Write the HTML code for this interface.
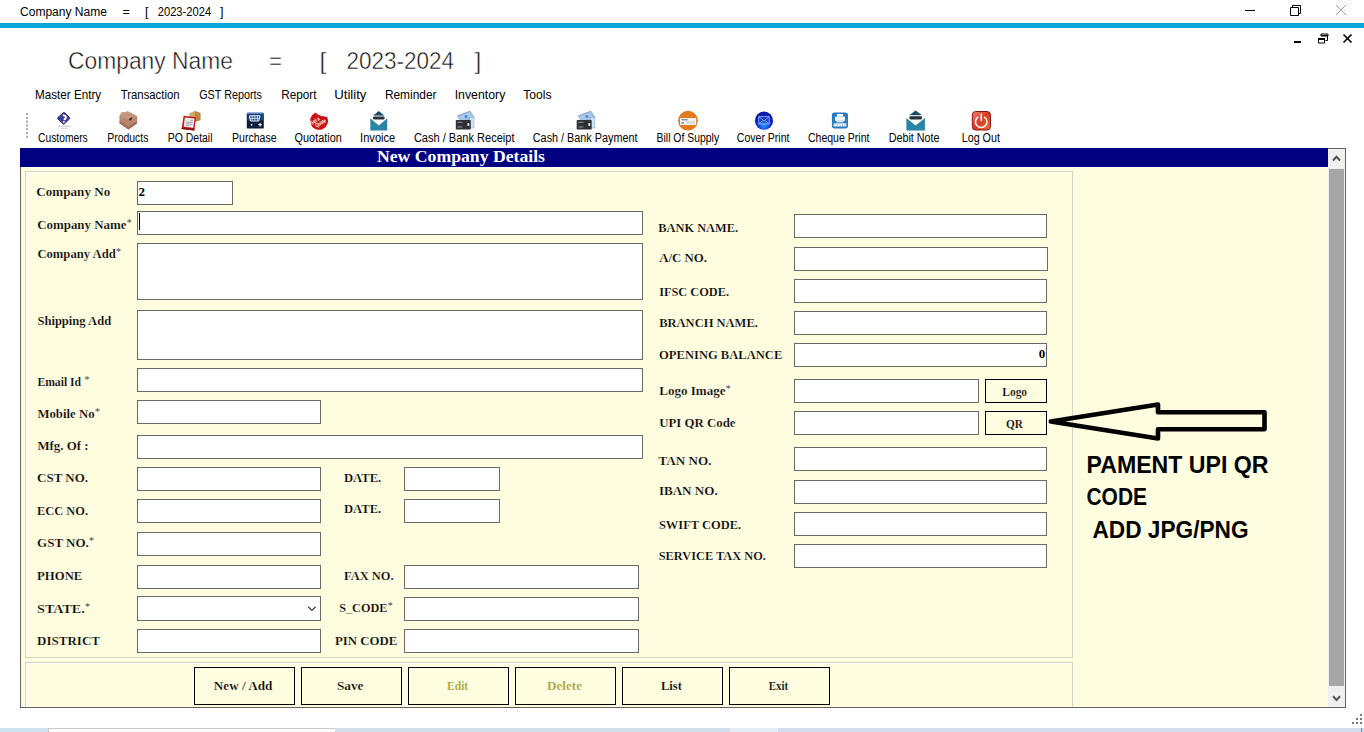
<!DOCTYPE html>
<html><head><meta charset="utf-8"><title>Company Name</title>
<style>html,body{margin:0;padding:0;width:1364px;height:732px;overflow:hidden;background:#fff;font-family:"Liberation Sans",sans-serif} svg{display:block}</style>
</head><body>
<svg width="1364" height="732" viewBox="0 0 1364 732" shape-rendering="geometricPrecision"><rect x="0" y="0" width="1364" height="732" fill="#FFFFFF" />
<text x="20" y="16" font-family="'Liberation Sans', sans-serif" font-size="12.5" font-weight="400" fill="#000" textLength="87" lengthAdjust="spacingAndGlyphs" >Company Name</text>
<text x="122.5" y="16" font-family="'Liberation Sans', sans-serif" font-size="12.5" font-weight="400" fill="#000" >=</text>
<text x="145" y="16" font-family="'Liberation Sans', sans-serif" font-size="12.5" font-weight="400" fill="#000" >[</text>
<text x="157.7" y="16" font-family="'Liberation Sans', sans-serif" font-size="12.5" font-weight="400" fill="#000" textLength="53.5" lengthAdjust="spacingAndGlyphs" >2023-2024</text>
<text x="220" y="16" font-family="'Liberation Sans', sans-serif" font-size="12.5" font-weight="400" fill="#000" >]</text>
<rect x="0" y="23" width="1364" height="5" fill="#0AA6D6" />
<rect x="1245" y="10" width="10" height="1" fill="#000" />
<path d="M1290.5 7.5h8v8h-8z M1292.5 7.5v-2h8v8h-2" fill="none" stroke="#000" stroke-width="1"/>
<path d="M1336 5L1346 15M1346 5L1336 15" stroke="#A0A0A0" stroke-width="1"/>
<rect x="1294" y="41" width="7" height="2" fill="#000" />
<path d="M1321.5 35.5h6v5h-2 M1321 34h7v2h-7z" fill="none" stroke="#000" stroke-width="1"/>
<path d="M1318.5 38.5h6v4.5h-6z" fill="#fff" stroke="#000" stroke-width="1"/><rect x="1318" y="38" width="7" height="2" fill="#000"/>
<path d="M1343.5 34.5L1351.5 42.5M1351.5 34.5L1343.5 42.5" stroke="#000" stroke-width="1.6"/>
<text x="68" y="69" font-family="'Liberation Sans', sans-serif" font-size="24.5" font-weight="400" fill="#101010" textLength="165" lengthAdjust="spacingAndGlyphs" stroke="#FFFFFF" stroke-width="0.5">Company Name</text>
<text x="269" y="69" font-family="'Liberation Sans', sans-serif" font-size="24.5" font-weight="400" fill="#101010" textLength="13" lengthAdjust="spacingAndGlyphs" stroke="#FFFFFF" stroke-width="0.5">=</text>
<text x="319.5" y="69" font-family="'Liberation Sans', sans-serif" font-size="24.5" font-weight="400" fill="#101010" stroke="#FFFFFF" stroke-width="0.5">[</text>
<text x="346.5" y="69" font-family="'Liberation Sans', sans-serif" font-size="24.5" font-weight="400" fill="#101010" textLength="107.5" lengthAdjust="spacingAndGlyphs" stroke="#FFFFFF" stroke-width="0.5">2023-2024</text>
<text x="474.5" y="69" font-family="'Liberation Sans', sans-serif" font-size="24.5" font-weight="400" fill="#101010" stroke="#FFFFFF" stroke-width="0.5">]</text>
<text x="35.1" y="98.7" font-family="'Liberation Sans', sans-serif" font-size="12.4" font-weight="400" fill="#000" textLength="66.1" lengthAdjust="spacingAndGlyphs" >Master Entry</text>
<text x="120.8" y="98.7" font-family="'Liberation Sans', sans-serif" font-size="12.4" font-weight="400" fill="#000" textLength="58.7" lengthAdjust="spacingAndGlyphs" >Transaction</text>
<text x="199.2" y="98.7" font-family="'Liberation Sans', sans-serif" font-size="12.4" font-weight="400" fill="#000" textLength="62.8" lengthAdjust="spacingAndGlyphs" >GST Reports</text>
<text x="281.2" y="98.7" font-family="'Liberation Sans', sans-serif" font-size="12.4" font-weight="400" fill="#000" textLength="35.3" lengthAdjust="spacingAndGlyphs" >Report</text>
<text x="334.2" y="98.7" font-family="'Liberation Sans', sans-serif" font-size="12.4" font-weight="400" fill="#000" textLength="32.3" lengthAdjust="spacingAndGlyphs" >Utility</text>
<text x="384.9" y="98.7" font-family="'Liberation Sans', sans-serif" font-size="12.4" font-weight="400" fill="#000" textLength="51.6" lengthAdjust="spacingAndGlyphs" >Reminder</text>
<text x="454.7" y="98.7" font-family="'Liberation Sans', sans-serif" font-size="12.4" font-weight="400" fill="#000" textLength="50.6" lengthAdjust="spacingAndGlyphs" >Inventory</text>
<text x="523.2" y="98.7" font-family="'Liberation Sans', sans-serif" font-size="12.4" font-weight="400" fill="#000" textLength="28.3" lengthAdjust="spacingAndGlyphs" >Tools</text>
<rect x="26" y="113.0" width="2" height="2" fill="#A8A8A8" />
<rect x="26" y="116.8" width="2" height="2" fill="#A8A8A8" />
<rect x="26" y="120.6" width="2" height="2" fill="#A8A8A8" />
<rect x="26" y="124.4" width="2" height="2" fill="#A8A8A8" />
<rect x="26" y="128.2" width="2" height="2" fill="#A8A8A8" />
<rect x="26" y="132.0" width="2" height="2" fill="#A8A8A8" />
<rect x="26" y="135.8" width="2" height="2" fill="#A8A8A8" />
<text x="38.099999999999994" y="141.8" font-family="'Liberation Sans', sans-serif" font-size="12.5" font-weight="400" fill="#000" textLength="49.6" lengthAdjust="spacingAndGlyphs" >Customers</text>
<text x="107.2" y="141.8" font-family="'Liberation Sans', sans-serif" font-size="12.5" font-weight="400" fill="#000" textLength="41.2" lengthAdjust="spacingAndGlyphs" >Products</text>
<text x="167.8" y="141.8" font-family="'Liberation Sans', sans-serif" font-size="12.5" font-weight="400" fill="#000" textLength="44.7" lengthAdjust="spacingAndGlyphs" >PO Detail</text>
<text x="232.10000000000002" y="141.8" font-family="'Liberation Sans', sans-serif" font-size="12.5" font-weight="400" fill="#000" textLength="44.4" lengthAdjust="spacingAndGlyphs" >Purchase</text>
<text x="294.6" y="141.8" font-family="'Liberation Sans', sans-serif" font-size="12.5" font-weight="400" fill="#000" textLength="47.2" lengthAdjust="spacingAndGlyphs" >Quotation</text>
<text x="360.1" y="141.8" font-family="'Liberation Sans', sans-serif" font-size="12.5" font-weight="400" fill="#000" textLength="35.2" lengthAdjust="spacingAndGlyphs" >Invoice</text>
<text x="413.90000000000003" y="141.8" font-family="'Liberation Sans', sans-serif" font-size="12.5" font-weight="400" fill="#000" textLength="100.6" lengthAdjust="spacingAndGlyphs" >Cash / Bank Receipt</text>
<text x="532.8" y="141.8" font-family="'Liberation Sans', sans-serif" font-size="12.5" font-weight="400" fill="#000" textLength="104.7" lengthAdjust="spacingAndGlyphs" >Cash / Bank Payment</text>
<text x="656.5999999999999" y="141.8" font-family="'Liberation Sans', sans-serif" font-size="12.5" font-weight="400" fill="#000" textLength="62.5" lengthAdjust="spacingAndGlyphs" >Bill Of Supply</text>
<text x="736.8" y="141.8" font-family="'Liberation Sans', sans-serif" font-size="12.5" font-weight="400" fill="#000" textLength="52.7" lengthAdjust="spacingAndGlyphs" >Cover Print</text>
<text x="807.9" y="141.8" font-family="'Liberation Sans', sans-serif" font-size="12.5" font-weight="400" fill="#000" textLength="61.6" lengthAdjust="spacingAndGlyphs" >Cheque Print</text>
<text x="888.6999999999999" y="141.8" font-family="'Liberation Sans', sans-serif" font-size="12.5" font-weight="400" fill="#000" textLength="50.8" lengthAdjust="spacingAndGlyphs" >Debit Note</text>
<text x="961.6999999999999" y="141.8" font-family="'Liberation Sans', sans-serif" font-size="12.5" font-weight="400" fill="#000" textLength="38.2" lengthAdjust="spacingAndGlyphs" >Log Out</text>
<g id="icons">
<!-- Customers -->
<path d="M64 112.4 Q64.4 112.4 64.8 112.8 L69.6 117.6 Q70.1 118.2 69.6 118.8 L64.3 123.9 Q63.7 124.4 63.1 123.9 L57.8 118.8 Q57.3 118.2 57.8 117.6 L63.2 112.8 Q63.6 112.4 64 112.4Z" fill="#40409E" stroke="#23236A" stroke-width="0.9"/>
<path d="M62.6 114.6 Q66.6 114.2 66.8 117.2 Q66.9 119.6 64.4 120.4 L63.4 118.9 Q65.1 118.3 64.9 117 Q64.7 115.9 62.9 116.2Z" fill="#FFFFFF"/>
<circle cx="63.8" cy="122" r="0.95" fill="#FFFFFF"/>
<rect x="58" y="125.6" width="12" height="1.1" fill="#C4C4D2"/>
<rect x="60.5" y="127.8" width="7" height="1" fill="#CFCFDA"/>
<!-- Products box -->
<path d="M119.4 115.9 L122 112.3 L125.5 112.5 L127.5 111.2 L137.3 116.2 L137 123.4 L128.5 129.5 L119.6 123.4Z" fill="#B8876E"/>
<path d="M119.4 115.9 L122 112.3 L125.5 112.5 L127.5 111.2 L137.3 116.2 L130 120 Z" fill="#C49680"/>
<path d="M119.6 123.4 L128.5 129.5 L137 123.4 L137 121 L128.5 126.5 L119.6 121Z" fill="#A26E58"/>
<path d="M129 119.6 L132 117.6 L130.6 120.2Z" fill="#3A2016" stroke="#3A2016" stroke-width="0.8"/>
<!-- PO Detail -->
<path d="M189.5 113.2 L195 111 L200.4 113 V120 L195 122 L189.5 120Z" fill="#D2A664"/>
<path d="M195 111 L200.4 113 V120 L195 122Z" fill="#B88646"/>
<path d="M183.6 115.8 L196 117.2 L194.4 130.4 L181.6 129Z" fill="#C01818"/>
<path d="M184.9 117.5 L194.5 118.6 L193.3 127.8 L183.7 126.7Z" fill="#F4F2F2"/>
<path d="M190 120.2 l3 0.3 M186 121.8 l7 0.8 M185.8 123.6 l6.8 0.8 M185.6 125.3 l4 0.4" stroke="#7A7A8A" stroke-width="0.7"/>
<path d="M181.6 129 L194.4 130.4 L194.6 128.8 L181.8 127.4Z" fill="#8A1010"/>
<!-- Purchase -->
<rect x="246.8" y="112.8" width="17" height="15.8" rx="1.2" fill="#0B1E3C"/>
<rect x="246.8" y="112.8" width="17" height="1.6" fill="#4C7FC0"/>
<rect x="247.6" y="114.4" width="15.4" height="6" fill="#16427E"/>
<path d="M249.5 115.8 h10.5 l-1.2 5.2 h-8.3z" fill="none" stroke="#E8F0FF" stroke-width="1"/>
<path d="M252.2 115.8 v5.2 M254.8 115.8 v5.2 M257.4 115.8 v5.2 M249.8 118.4 h10" stroke="#E8F0FF" stroke-width="0.8"/>
<circle cx="251.6" cy="124.8" r="0.9" fill="#fff"/>
<path d="M258.3 124.8 h3.6 M260.1 123 v3.6" stroke="#fff" stroke-width="1.1"/>
<!-- Quotation -->
<path d="M314.8 112.9 Q320.5 117.3 327.3 117.2 A9 9 0 1 1 314.8 112.9Z" fill="#D01010"/>
<path d="M314.8 112.9 Q320.5 117.3 327.3 117.2" fill="none" stroke="#8A0A0A" stroke-width="0.8"/>
<path d="M316 112.6 Q322 112.5 327 116.6 Q320.5 116.6 316 112.6Z" fill="#EDEDED"/>
<text x="0" y="0" font-family="'Liberation Sans', sans-serif" font-size="5.6" font-weight="700" fill="#FFFFFF" textLength="10" lengthAdjust="spacingAndGlyphs" transform="translate(311.6 125) rotate(-30)">Get a</text>
<text x="0" y="0" font-family="'Liberation Sans', sans-serif" font-size="5.6" font-weight="700" fill="#FFFFFF" textLength="11.5" lengthAdjust="spacingAndGlyphs" transform="translate(316.4 127.6) rotate(-30)">Quote</text>
<!-- Invoice -->
<path d="M371.5 117 L378.8 111.1 L386 117Z" fill="#1C4A6A"/>
<rect x="371.6" y="115.6" width="14.4" height="8.5" fill="#FFFFFF"/>
<rect x="373" y="116.6" width="11.6" height="3" rx="1.3" fill="#263238"/>
<path d="M370.3 118.2 L378.8 125.4 L387.2 118.2 V130.6 H370.3Z" fill="#2A86A9"/>
<!-- Cash receipt -->
<path d="M457.5 115.8 L470 111.3 L474 117.5 L461.5 122Z" fill="#A9C8EA" stroke="#5E8BC4" stroke-width="0.7"/>
<circle cx="466" cy="116.5" r="1.6" fill="#5E8BC4"/>
<rect x="469.5" y="117.5" width="4.5" height="10.5" fill="#D3E3F3" stroke="#7FA5D2" stroke-width="0.5"/>
<rect x="455.8" y="120" width="15" height="9.5" rx="0.8" fill="#2D3136"/>
<rect x="457.5" y="121.8" width="5" height="0.9" fill="#9AA"/><rect x="457.5" y="126.5" width="5" height="0.9" fill="#9AA"/>
<rect x="467.5" y="123" width="1.8" height="3" fill="#DDD"/>
<!-- Cash payment -->
<path d="M578.4 115.8 L590.9 111.3 L594.9 117.5 L582.4 122Z" fill="#A9C8EA" stroke="#5E8BC4" stroke-width="0.7"/>
<circle cx="586.9" cy="116.5" r="1.6" fill="#5E8BC4"/>
<rect x="590.4" y="117.5" width="4.5" height="10.5" fill="#D3E3F3" stroke="#7FA5D2" stroke-width="0.5"/>
<rect x="576.7" y="120" width="15" height="9.5" rx="0.8" fill="#2D3136"/>
<rect x="578.4" y="121.8" width="5" height="0.9" fill="#9AA"/><rect x="578.4" y="126.5" width="5" height="0.9" fill="#9AA"/>
<rect x="588.4" y="123" width="1.8" height="3" fill="#DDD"/>
<!-- Bill of supply -->
<circle cx="688" cy="120.7" r="9.9" fill="#E27A1E"/>
<rect x="680" y="118" width="16.2" height="7" fill="#F2F2F2"/>
<rect x="681.5" y="119.3" width="6" height="1" fill="#666"/><rect x="681.5" y="122.5" width="2.5" height="1" fill="#444"/>
<rect x="686" y="121" width="9" height="3" fill="#D8DCE4"/>
<!-- Cover print -->
<defs><radialGradient id="rg1" cx="0.5" cy="0.75" r="0.6"><stop offset="0" stop-color="#2C9CF0"/><stop offset="0.55" stop-color="#1436D8"/><stop offset="1" stop-color="#0A1AA8"/></radialGradient></defs>
<circle cx="764" cy="120.7" r="9.1" fill="url(#rg1)"/>
<path d="M758.8 116.6 h10.4 v7.4 h-10.4z M758.8 116.6 l5.2 4.3 l5.2-4.3 M758.8 124 l3.6-3.1 M769.2 124 l-3.6-3.1" fill="none" stroke="#9CC4FF" stroke-width="0.8"/>
<!-- Cheque print -->
<rect x="831.9" y="112.6" width="16.1" height="15.8" rx="2.6" fill="#2A7BC0"/>
<rect x="837" y="114" width="6" height="2.5" fill="#FFFFFF"/>
<rect x="835" y="116.5" width="10" height="4.5" rx="1" fill="#F0F6FC"/>
<rect x="836.5" y="120.5" width="7" height="2" fill="#C8DDF0"/>
<rect x="833.6" y="123.4" width="12.8" height="3" fill="#FFFFFF"/>
<path d="M835 124.2h1.2M837.5 124.2v2M840 124.2v2M842.5 124.2v2M845 124.2v2" stroke="#2A7BC0" stroke-width="0.5"/>
<!-- Debit note -->
<path d="M907.6 116.6 L915.6 110.6 L923.7 116.6Z" fill="#1C4A6A"/>
<rect x="907.8" y="115.2" width="15.8" height="8.8" fill="#FFFFFF"/>
<rect x="909.3" y="116.2" width="12.8" height="3.2" rx="1.4" fill="#263238"/>
<path d="M906.4 118 L915.65 125.4 L924.9 118 V130.4 H906.4Z" fill="#2A86A9"/>
<!-- Log out -->
<defs><linearGradient id="lg1" x1="0" y1="0" x2="1" y2="1"><stop offset="0" stop-color="#F08070"/><stop offset="0.5" stop-color="#D83A20"/><stop offset="1" stop-color="#F07040"/></linearGradient></defs>
<rect x="972.3" y="111.5" width="18.2" height="18.5" rx="3.4" fill="url(#lg1)" stroke="#8E1410" stroke-width="1"/>
<path d="M978.3 116.9 a5.7 5.7 0 1 0 5.8 0" fill="none" stroke="#FFFFFF" stroke-width="1.4"/>
<rect x="980.5" y="113.8" width="1.6" height="7.4" fill="#FFFFFF"/>
</g>

<rect x="20" y="148" width="1326" height="560" fill="#646464" />
<rect x="21" y="149" width="1324" height="558" fill="#FFFDE0" />
<rect x="20" y="148" width="1308" height="19" fill="#000080" />
<rect x="21" y="167" width="1307" height="1" fill="#FFFFFF" />
<rect x="1328" y="149" width="17" height="558" fill="#F0F0F0" />
<rect x="1329" y="169" width="15" height="517" fill="#A6A6A6" />
<path d="M1333 160.5L1336.5 156.8L1340 160.5" fill="none" stroke="#555" stroke-width="2"/>
<path d="M1333 696.3L1336.5 700L1340 696.3" fill="none" stroke="#555" stroke-width="2"/>
<text x="377" y="161.9" font-family="'Liberation Serif', serif" font-size="16.3" font-weight="700" fill="#FFFFFF" textLength="168" lengthAdjust="spacingAndGlyphs" >New Company Details</text>
<rect x="25" y="171" width="1048" height="1" fill="#D6D3C0" />
<rect x="25" y="171" width="1" height="487" fill="#D6D3C0" />
<rect x="1072" y="171" width="1" height="487" fill="#D6D3C0" />
<rect x="25" y="657" width="1048" height="1" fill="#D6D3C0" />
<rect x="26" y="172" width="1046" height="1" fill="#FFFFFF" />
<rect x="26" y="172" width="1" height="485" fill="#FFFFFF" />
<rect x="25" y="662" width="1048" height="1" fill="#D6D3C0" />
<rect x="25" y="662" width="1" height="45" fill="#D6D3C0" />
<rect x="1072" y="662" width="1" height="45" fill="#D6D3C0" />
<rect x="26" y="663" width="1046" height="1" fill="#FFFFFF" />
<rect x="26" y="663" width="1" height="44" fill="#FFFFFF" />
<rect x="137" y="181" width="96" height="24" fill="#6A6A64" />
<rect x="138" y="182" width="94" height="22" fill="#FFFFFF" />
<rect x="137" y="211" width="506" height="24" fill="#6A6A64" />
<rect x="138" y="212" width="504" height="22" fill="#FFFFFF" />
<rect x="137" y="243" width="506" height="57" fill="#6A6A64" />
<rect x="138" y="244" width="504" height="55" fill="#FFFFFF" />
<rect x="137" y="310" width="506" height="50" fill="#6A6A64" />
<rect x="138" y="311" width="504" height="48" fill="#FFFFFF" />
<rect x="137" y="368" width="506" height="24" fill="#6A6A64" />
<rect x="138" y="369" width="504" height="22" fill="#FFFFFF" />
<rect x="137" y="400" width="184" height="24" fill="#6A6A64" />
<rect x="138" y="401" width="182" height="22" fill="#FFFFFF" />
<rect x="137" y="435" width="506" height="24" fill="#6A6A64" />
<rect x="138" y="436" width="504" height="22" fill="#FFFFFF" />
<rect x="137" y="467" width="184" height="24" fill="#6A6A64" />
<rect x="138" y="468" width="182" height="22" fill="#FFFFFF" />
<rect x="137" y="499" width="184" height="24" fill="#6A6A64" />
<rect x="138" y="500" width="182" height="22" fill="#FFFFFF" />
<rect x="137" y="532" width="184" height="24" fill="#6A6A64" />
<rect x="138" y="533" width="182" height="22" fill="#FFFFFF" />
<rect x="137" y="565" width="184" height="24" fill="#6A6A64" />
<rect x="138" y="566" width="182" height="22" fill="#FFFFFF" />
<rect x="137" y="596" width="184" height="25" fill="#6A6A64" />
<rect x="138" y="597" width="182" height="23" fill="#FFFFFF" />
<rect x="137" y="629" width="184" height="24" fill="#6A6A64" />
<rect x="138" y="630" width="182" height="22" fill="#FFFFFF" />
<rect x="404" y="467" width="96" height="24" fill="#6A6A64" />
<rect x="405" y="468" width="94" height="22" fill="#FFFFFF" />
<rect x="404" y="499" width="96" height="24" fill="#6A6A64" />
<rect x="405" y="500" width="94" height="22" fill="#FFFFFF" />
<rect x="404" y="565" width="235" height="24" fill="#6A6A64" />
<rect x="405" y="566" width="233" height="22" fill="#FFFFFF" />
<rect x="404" y="597" width="235" height="24" fill="#6A6A64" />
<rect x="405" y="598" width="233" height="22" fill="#FFFFFF" />
<rect x="404" y="629" width="235" height="24" fill="#6A6A64" />
<rect x="405" y="630" width="233" height="22" fill="#FFFFFF" />
<rect x="794" y="214" width="253" height="24" fill="#6A6A64" />
<rect x="795" y="215" width="251" height="22" fill="#FFFFFF" />
<rect x="794" y="247" width="254" height="24" fill="#6A6A64" />
<rect x="795" y="248" width="252" height="22" fill="#FFFFFF" />
<rect x="794" y="279" width="253" height="24" fill="#6A6A64" />
<rect x="795" y="280" width="251" height="22" fill="#FFFFFF" />
<rect x="794" y="311" width="253" height="24" fill="#6A6A64" />
<rect x="795" y="312" width="251" height="22" fill="#FFFFFF" />
<rect x="794" y="343" width="253" height="24" fill="#6A6A64" />
<rect x="795" y="344" width="251" height="22" fill="#FFFFFF" />
<rect x="794" y="379" width="185" height="24" fill="#6A6A64" />
<rect x="795" y="380" width="183" height="22" fill="#FFFFFF" />
<rect x="794" y="411" width="185" height="24" fill="#6A6A64" />
<rect x="795" y="412" width="183" height="22" fill="#FFFFFF" />
<rect x="794" y="447" width="253" height="24" fill="#6A6A64" />
<rect x="795" y="448" width="251" height="22" fill="#FFFFFF" />
<rect x="794" y="480" width="253" height="24" fill="#6A6A64" />
<rect x="795" y="481" width="251" height="22" fill="#FFFFFF" />
<rect x="794" y="512" width="253" height="24" fill="#6A6A64" />
<rect x="795" y="513" width="251" height="22" fill="#FFFFFF" />
<rect x="794" y="544" width="253" height="24" fill="#6A6A64" />
<rect x="795" y="545" width="251" height="22" fill="#FFFFFF" />
<path d="M308.2 606.7L311.9 610.4L315.6 606.7" fill="none" stroke="#444" stroke-width="1.3"/>
<rect x="139" y="213" width="1" height="17" fill="#000" />
<text x="138.5" y="195.8" font-family="'Liberation Serif', serif" font-size="13" font-weight="700" fill="#000" >2</text>
<text x="1038.8" y="358.4" font-family="'Liberation Serif', serif" font-size="13" font-weight="700" fill="#000" >0</text>
<text x="36.35" y="195.7" font-family="'Liberation Serif', serif" font-size="13" font-weight="700" fill="#000" textLength="73.9" lengthAdjust="spacingAndGlyphs" stroke="#FFFDE0" stroke-width="0.2">Company No</text>
<text x="37.2" y="228.8" font-family="'Liberation Serif', serif" font-size="13" font-weight="700" fill="#000" textLength="89.3" lengthAdjust="spacingAndGlyphs" stroke="#FFFDE0" stroke-width="0.2">Company Name</text>
<text x="126.8" y="226.20000000000002" font-family="'Liberation Serif', serif" font-size="10" font-weight="400" fill="#444" >*</text>
<text x="37.4" y="258" font-family="'Liberation Serif', serif" font-size="13" font-weight="700" fill="#000" textLength="78.3" lengthAdjust="spacingAndGlyphs" stroke="#FFFDE0" stroke-width="0.2">Company Add</text>
<text x="116.0" y="255.4" font-family="'Liberation Serif', serif" font-size="10" font-weight="400" fill="#444" >*</text>
<text x="37.4" y="324.8" font-family="'Liberation Serif', serif" font-size="13" font-weight="700" fill="#000" textLength="73.8" lengthAdjust="spacingAndGlyphs" stroke="#FFFDE0" stroke-width="0.2">Shipping Add</text>
<text x="37.4" y="385.8" font-family="'Liberation Serif', serif" font-size="13" font-weight="700" fill="#000" textLength="43.7" lengthAdjust="spacingAndGlyphs" stroke="#FFFDE0" stroke-width="0.2">Email Id</text>
<text x="84.39999999999999" y="383.2" font-family="'Liberation Serif', serif" font-size="10" font-weight="400" fill="#444" >*</text>
<text x="37.4" y="418" font-family="'Liberation Serif', serif" font-size="13" font-weight="700" fill="#000" textLength="57.2" lengthAdjust="spacingAndGlyphs" stroke="#FFFDE0" stroke-width="0.2">Mobile No</text>
<text x="94.89999999999999" y="415.4" font-family="'Liberation Serif', serif" font-size="10" font-weight="400" fill="#444" >*</text>
<text x="37.4" y="450.4" font-family="'Liberation Serif', serif" font-size="13" font-weight="700" fill="#000" textLength="51.2" lengthAdjust="spacingAndGlyphs" stroke="#FFFDE0" stroke-width="0.2">Mfg. Of :</text>
<text x="37.1" y="481.8" font-family="'Liberation Serif', serif" font-size="13" font-weight="700" fill="#000" textLength="50.9" lengthAdjust="spacingAndGlyphs" stroke="#FFFDE0" stroke-width="0.2">CST NO.</text>
<text x="37.1" y="514.6" font-family="'Liberation Serif', serif" font-size="13" font-weight="700" fill="#000" textLength="50.9" lengthAdjust="spacingAndGlyphs" stroke="#FFFDE0" stroke-width="0.2">ECC NO.</text>
<text x="37.1" y="546.8" font-family="'Liberation Serif', serif" font-size="13" font-weight="700" fill="#000" textLength="51.7" lengthAdjust="spacingAndGlyphs" stroke="#FFFDE0" stroke-width="0.2">GST NO.</text>
<text x="89.1" y="544.1999999999999" font-family="'Liberation Serif', serif" font-size="10" font-weight="400" fill="#444" >*</text>
<text x="37.1" y="580" font-family="'Liberation Serif', serif" font-size="13" font-weight="700" fill="#000" textLength="45.2" lengthAdjust="spacingAndGlyphs" stroke="#FFFDE0" stroke-width="0.2">PHONE</text>
<text x="37.1" y="612.8" font-family="'Liberation Serif', serif" font-size="13" font-weight="700" fill="#000" textLength="47.6" lengthAdjust="spacingAndGlyphs" stroke="#FFFDE0" stroke-width="0.2">STATE.</text>
<text x="85.0" y="610.1999999999999" font-family="'Liberation Serif', serif" font-size="10" font-weight="400" fill="#444" >*</text>
<text x="37.1" y="644.8" font-family="'Liberation Serif', serif" font-size="13" font-weight="700" fill="#000" textLength="62.9" lengthAdjust="spacingAndGlyphs" stroke="#FFFDE0" stroke-width="0.2">DISTRICT</text>
<text x="343.9" y="482.2" font-family="'Liberation Serif', serif" font-size="13" font-weight="700" fill="#000" textLength="37.4" lengthAdjust="spacingAndGlyphs" stroke="#FFFDE0" stroke-width="0.2">DATE.</text>
<text x="343.9" y="513.4" font-family="'Liberation Serif', serif" font-size="13" font-weight="700" fill="#000" textLength="37.4" lengthAdjust="spacingAndGlyphs" stroke="#FFFDE0" stroke-width="0.2">DATE.</text>
<text x="344.0" y="580.1" font-family="'Liberation Serif', serif" font-size="13" font-weight="700" fill="#000" textLength="49.5" lengthAdjust="spacingAndGlyphs" stroke="#FFFDE0" stroke-width="0.2">FAX NO.</text>
<text x="339.2" y="611.7" font-family="'Liberation Serif', serif" font-size="13" font-weight="700" fill="#000" textLength="48.3" lengthAdjust="spacingAndGlyphs" stroke="#FFFDE0" stroke-width="0.2">S_CODE</text>
<text x="387.8" y="609.1" font-family="'Liberation Serif', serif" font-size="10" font-weight="400" fill="#444" >*</text>
<text x="335.0" y="644.7" font-family="'Liberation Serif', serif" font-size="13" font-weight="700" fill="#000" textLength="62.4" lengthAdjust="spacingAndGlyphs" stroke="#FFFDE0" stroke-width="0.2">PIN CODE</text>
<text x="658.2" y="232" font-family="'Liberation Serif', serif" font-size="13" font-weight="700" fill="#000" textLength="80.0" lengthAdjust="spacingAndGlyphs" stroke="#FFFDE0" stroke-width="0.2">BANK NAME.</text>
<text x="659.2" y="262" font-family="'Liberation Serif', serif" font-size="13" font-weight="700" fill="#000" textLength="47.9" lengthAdjust="spacingAndGlyphs" stroke="#FFFDE0" stroke-width="0.2">A/C NO.</text>
<text x="659.2" y="296" font-family="'Liberation Serif', serif" font-size="13" font-weight="700" fill="#000" textLength="69.8" lengthAdjust="spacingAndGlyphs" stroke="#FFFDE0" stroke-width="0.2">IFSC CODE.</text>
<text x="659.2" y="327" font-family="'Liberation Serif', serif" font-size="13" font-weight="700" fill="#000" textLength="98.7" lengthAdjust="spacingAndGlyphs" stroke="#FFFDE0" stroke-width="0.2">BRANCH NAME.</text>
<text x="659.1" y="359" font-family="'Liberation Serif', serif" font-size="13" font-weight="700" fill="#000" textLength="123.2" lengthAdjust="spacingAndGlyphs" stroke="#FFFDE0" stroke-width="0.2">OPENING BALANCE</text>
<text x="659.2" y="395" font-family="'Liberation Serif', serif" font-size="13" font-weight="700" fill="#000" textLength="66.3" lengthAdjust="spacingAndGlyphs" stroke="#FFFDE0" stroke-width="0.2">Logo Image</text>
<text x="725.8" y="392.4" font-family="'Liberation Serif', serif" font-size="10" font-weight="400" fill="#444" >*</text>
<text x="659.2" y="427" font-family="'Liberation Serif', serif" font-size="13" font-weight="700" fill="#000" textLength="76.3" lengthAdjust="spacingAndGlyphs" stroke="#FFFDE0" stroke-width="0.2">UPI QR Code</text>
<text x="658.5" y="465" font-family="'Liberation Serif', serif" font-size="13" font-weight="700" fill="#000" textLength="53" lengthAdjust="spacingAndGlyphs" stroke="#FFFDE0" stroke-width="0.2">TAN NO.</text>
<text x="658.9" y="495" font-family="'Liberation Serif', serif" font-size="13" font-weight="700" fill="#000" textLength="58.8" lengthAdjust="spacingAndGlyphs" stroke="#FFFDE0" stroke-width="0.2">IBAN NO.</text>
<text x="658.9" y="529" font-family="'Liberation Serif', serif" font-size="13" font-weight="700" fill="#000" textLength="82.3" lengthAdjust="spacingAndGlyphs" stroke="#FFFDE0" stroke-width="0.2">SWIFT CODE.</text>
<text x="658.7" y="559.5" font-family="'Liberation Serif', serif" font-size="13" font-weight="700" fill="#000" textLength="107.2" lengthAdjust="spacingAndGlyphs" stroke="#FFFDE0" stroke-width="0.2">SERVICE TAX NO.</text>
<rect x="985" y="379" width="62" height="24" fill="#000000" />
<rect x="986" y="380" width="60" height="22" fill="#FFFDE0" />
<rect x="985" y="411" width="62" height="24" fill="#000000" />
<rect x="986" y="412" width="60" height="22" fill="#FFFDE0" />
<text x="1002.3" y="395.8" font-family="'Liberation Serif', serif" font-size="11.6" font-weight="700" fill="#000" textLength="24.8" lengthAdjust="spacingAndGlyphs" stroke="#FFFDE0" stroke-width="0.2">Logo</text>
<text x="1006" y="427.9" font-family="'Liberation Serif', serif" font-size="11.6" font-weight="700" fill="#000" textLength="17" lengthAdjust="spacingAndGlyphs" stroke="#FFFDE0" stroke-width="0.2">QR</text>
<rect x="194" y="667" width="101" height="38" fill="#000000" />
<rect x="195" y="668" width="99" height="36" fill="#FFFDE0" />
<text x="213.8" y="689.7" font-family="'Liberation Serif', serif" font-size="13" font-weight="700" fill="#000" textLength="58.6" lengthAdjust="spacingAndGlyphs" stroke="#FFFDE0" stroke-width="0.2">New / Add</text>
<rect x="301" y="667" width="101" height="38" fill="#000000" />
<rect x="302" y="668" width="99" height="36" fill="#FFFDE0" />
<text x="337.0" y="689.7" font-family="'Liberation Serif', serif" font-size="13" font-weight="700" fill="#000" textLength="26.5" lengthAdjust="spacingAndGlyphs" stroke="#FFFDE0" stroke-width="0.2">Save</text>
<rect x="408" y="667" width="101" height="38" fill="#000000" />
<rect x="409" y="668" width="99" height="36" fill="#FFFDE0" />
<text x="447.1" y="689.7" font-family="'Liberation Serif', serif" font-size="13" font-weight="700" fill="#A29E32" textLength="21.1" lengthAdjust="spacingAndGlyphs" stroke="#FFFDE0" stroke-width="0.2">Edit</text>
<rect x="515" y="667" width="101" height="38" fill="#000000" />
<rect x="516" y="668" width="99" height="36" fill="#FFFDE0" />
<text x="547.1" y="689.7" font-family="'Liberation Serif', serif" font-size="13" font-weight="700" fill="#A29E32" textLength="34.9" lengthAdjust="spacingAndGlyphs" stroke="#FFFDE0" stroke-width="0.2">Delete</text>
<rect x="622" y="667" width="101" height="38" fill="#000000" />
<rect x="623" y="668" width="99" height="36" fill="#FFFDE0" />
<text x="661.0" y="689.7" font-family="'Liberation Serif', serif" font-size="13" font-weight="700" fill="#000" textLength="20.8" lengthAdjust="spacingAndGlyphs" stroke="#FFFDE0" stroke-width="0.2">List</text>
<rect x="729" y="667" width="101" height="38" fill="#000000" />
<rect x="730" y="668" width="99" height="36" fill="#FFFDE0" />
<text x="768.7" y="689.7" font-family="'Liberation Serif', serif" font-size="13" font-weight="700" fill="#000" textLength="19.6" lengthAdjust="spacingAndGlyphs" stroke="#FFFDE0" stroke-width="0.2">Exit</text>
<path d="M1050.8 421.5L1158 404.5V412.3H1264.5V429.2H1158V438.5Z" fill="none" stroke="#000" stroke-width="4.6" stroke-linejoin="round"/>
<text x="1086.5" y="473" font-family="'Liberation Sans', sans-serif" font-size="24" font-weight="700" fill="#000" textLength="182" lengthAdjust="spacingAndGlyphs" >PAMENT UPI QR</text>
<text x="1086.5" y="505.4" font-family="'Liberation Sans', sans-serif" font-size="24" font-weight="700" fill="#000" textLength="60.5" lengthAdjust="spacingAndGlyphs" >CODE</text>
<text x="1092.5" y="538.1" font-family="'Liberation Sans', sans-serif" font-size="24" font-weight="700" fill="#000" textLength="156" lengthAdjust="spacingAndGlyphs" >ADD JPG/PNG</text>
<rect x="0" y="728" width="48" height="4" fill="#CDE2EE" />
<rect x="48" y="728" width="287" height="4" fill="#FFFFFF" />
<rect x="48" y="728" width="287" height="1" fill="#C8C8C8" />
<rect x="48" y="728" width="1" height="4" fill="#C8C8C8" />
<rect x="335" y="728" width="395" height="4" fill="#D2DEE9" />
<rect x="730" y="728" width="48" height="4" fill="#E4EDF4" />
<rect x="778" y="728" width="586" height="4" fill="#D3DCEA" />
<rect x="1361" y="728" width="1" height="4" fill="#888" />
<rect x="1360" y="714" width="2" height="2" fill="#7A7A7A" />
<rect x="1356" y="718" width="2" height="2" fill="#7A7A7A" />
<rect x="1360" y="718" width="2" height="2" fill="#7A7A7A" />
<rect x="1352" y="722" width="2" height="2" fill="#7A7A7A" />
<rect x="1356" y="722" width="2" height="2" fill="#7A7A7A" />
<rect x="1360" y="722" width="2" height="2" fill="#7A7A7A" /></svg>
</body></html>
